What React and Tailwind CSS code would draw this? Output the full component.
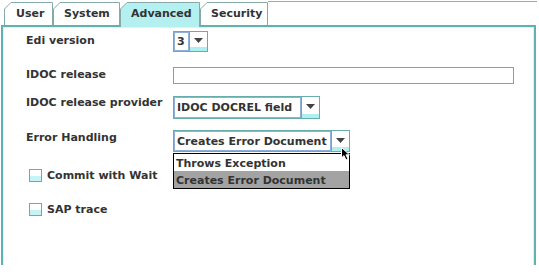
import React from "react";

function Tab({ label, width, textLeft }) {
  const h = 23;
  return (
    <div className="relative shrink-0" style={{ width, height: h }}>
      <svg className="absolute inset-0" width={width} height={h} viewBox={`0 0 ${width} ${h}`}>
        <path
          d={`M0.5 ${h} L0.5 7 L7 0.5 L${width - 0.5} 0.5 L${width - 0.5} ${h}`}
          fill="#ffffff"
          stroke="#86a9a9"
          strokeWidth="1"
        />
      </svg>
      <span className="absolute top-[5px] leading-[14px]" style={{ left: textLeft }}>
        {label}
      </span>
    </div>
  );
}

function Arrow() {
  return (
    <div className="relative w-[18px] h-full bg-white border-l border-[#66adad] flex items-center justify-center">
      <div className="absolute left-0 right-0 bottom-0 h-[4px] bg-[#aef0f0]" />
      <svg width="9" height="5" viewBox="0 0 9 5" className="relative -mt-[2px]">
        <path d="M0 0 L9 0 L4.5 5 Z" fill="#444" />
      </svg>
    </div>
  );
}

function Combo({ value, width, height }) {
  return (
    <div className="flex border border-[#66adad] bg-white" style={{ width, height }}>
      <div className="flex-1 border border-[#8fb0da] flex items-center pl-[2px] pt-[1px] leading-[14px] whitespace-nowrap overflow-hidden">
        {value}
      </div>
      <Arrow />
    </div>
  );
}

function Checkbox({ label }) {
  return (
    <div className="flex items-center ml-[3px] h-[13px]">
      <div className="relative w-[13px] h-[13px] border border-[#66adad] bg-white overflow-hidden">
        <div className="absolute left-0 right-0 bottom-0 h-[5px] bg-[#c4f4f4]" />
      </div>
      <span className="ml-[5px] pt-[1px] leading-[14px] whitespace-nowrap">{label}</span>
    </div>
  );
}

export default function App() {
  return (
    <div className="relative w-[539px] h-[275px] bg-white overflow-hidden font-['DejaVu_Sans',sans-serif] text-[11px] font-bold text-[#333]">
      {/* tab strip */}
      <div className="relative h-[25px] flex items-end pl-[4px]">
        <div className="absolute left-[268px] right-[2px] top-[1px] h-[1px] bg-[#98acac]" />
        <Tab label="User" width={49} textLeft={12} />
        <Tab label="System" width={67} textLeft={11} />
        <div className="relative z-10 -mb-[2px]">
          <div className="relative" style={{ height: 25 }}>
            <svg className="absolute inset-0" width={80} height={25} viewBox="0 0 80 25">
              <path d="M0.5 25 L0.5 7 L7 0.5 L79.5 0.5 L79.5 25" fill="#b4f0f0" stroke="#86a9a9" strokeWidth="1" />
            </svg>
            <span className="relative block w-[80px] pl-[11px] pt-[5px] leading-[14px]">Advanced</span>
          </div>
        </div>
        <Tab label="Security" width={68} textLeft={11} />
      </div>

      {/* panel */}
      <div className="ml-[1px] w-[535px] h-[240px] border-t-2 border-l-2 border-r-2 border-[#62b0b0]">
        <div className="h-full border-t border-l border-r border-[#d6f6f6] pl-[22px] flex flex-col">
          {/* Edi version */}
          <div className="flex items-start mt-[3px]">
            <div className="w-[147px] mt-[3px] leading-[14px]">Edi version</div>
            <Combo value="3" width={35} height={21} />
          </div>
          {/* IDOC release */}
          <div className="flex items-start mt-[15px]">
            <div className="w-[147px] mt-[1px] leading-[14px]">IDOC release</div>
            <div className="w-[341px] h-[17px] border border-[#66adad] bg-white" />
          </div>
          {/* IDOC release provider */}
          <div className="flex items-start mt-[12px]">
            <div className="w-[147px] leading-[14px]">IDOC release provider</div>
            <Combo value="IDOC DOCREL field" width={147} height={23} />
          </div>
          {/* Error handling */}
          <div className="flex items-start mt-[11px] relative">
            <div className="w-[147px] mt-[1px] leading-[14px]">Error Handling</div>
            <div className="relative">
              <Combo value="Creates Error Document" width={177} height={22} />
              {/* open list */}
              <div className="absolute left-0 top-[23px] w-[177px] border border-black bg-white z-20">
                <div className="h-[17px] pl-[2px] pt-[1px] leading-[17px] whitespace-nowrap">Throws Exception</div>
                <div className="h-[17px] pl-[2px] pt-[1px] leading-[17px] whitespace-nowrap bg-[#a3a3a3]">Creates Error Document</div>
              </div>
              {/* mouse pointer */}
              <svg className="absolute left-[168px] top-[17px] z-30" width="12" height="14" viewBox="0 0 12 14">
                <path d="M0.5 0.5 L0.5 11 L3 8.6 L5 13 L7 12 L5 7.8 L8.5 7.8 Z" fill="#000" stroke="#fff" strokeWidth="1" />
              </svg>
            </div>
          </div>
          {/* checkboxes */}
          <div className="mt-[17px]">
            <Checkbox label="Commit with Wait" />
          </div>
          <div className="mt-[21px]">
            <Checkbox label="SAP trace" />
          </div>
        </div>
      </div>
    </div>
  );
}
